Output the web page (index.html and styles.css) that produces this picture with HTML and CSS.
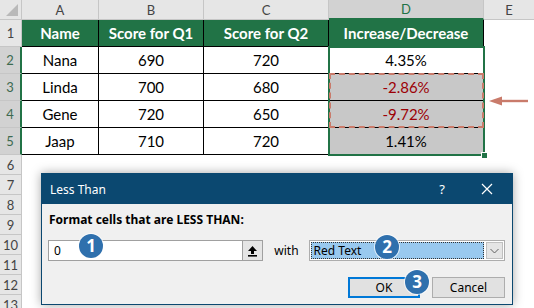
FILE: index.html
```html
<!DOCTYPE html>
<html lang="en">
  <head>
    <title>Less Than</title>
    <link rel="stylesheet" href="styles.css">
  </head>
  <body>
    <div class="sheet">
      <div class="grid">
        <div class="corner"><span class="tri"></span></div>
        <div class="colhead">A</div>
        <div class="colhead">B</div>
        <div class="colhead">C</div>
        <div class="colhead selected">D</div>
        <div class="colhead last">E</div>

        <div class="rowhead">1</div>
        <div class="cell title">Name</div>
        <div class="cell title">Score for Q1</div>
        <div class="cell title">Score for Q2</div>
        <div class="cell title">Increase/Decrease</div>
        <div class="blank"></div>

        <div class="rowhead selected">2</div>
        <div class="cell">Nana</div>
        <div class="cell">690</div>
        <div class="cell">720</div>
        <div class="cell">4.35%</div>
        <div class="blank"></div>

        <div class="rowhead selected">3</div>
        <div class="cell">Linda</div>
        <div class="cell">700</div>
        <div class="cell">680</div>
        <div class="cell shade red">-2.86%</div>
        <div class="blank"></div>

        <div class="rowhead selected">4</div>
        <div class="cell">Gene</div>
        <div class="cell">720</div>
        <div class="cell">650</div>
        <div class="cell shade red">-9.72%</div>
        <div class="blank"></div>

        <div class="rowhead selected">5</div>
        <div class="cell">Jaap</div>
        <div class="cell">710</div>
        <div class="cell">720</div>
        <div class="cell shade">1.41%</div>
        <div class="blank"></div>

        <div class="rowhead small">6</div><div class="empty"></div>
        <div class="rowhead small">7</div><div class="empty"></div>
        <div class="rowhead small">8</div><div class="empty"></div>
        <div class="rowhead small">9</div><div class="empty"></div>
        <div class="rowhead small">10</div><div class="empty"></div>
        <div class="rowhead small">11</div><div class="empty"></div>
        <div class="rowhead small">12</div><div class="empty"></div>
        <div class="rowhead small">13</div><div class="empty"></div>
      </div>

      <div class="selection"><span class="handle"></span></div>
      <div class="ants"></div>
      <svg class="pointer" width="44" height="12" viewBox="0 0 44 12">
        <path d="M12 6 H40" stroke="#c97b6b" stroke-width="2.4" />
        <path d="M1 6 L14 1.5 L14 10.5 Z" fill="#c97b6b" />
      </svg>
    </div>

    <div class="dialog">
      <div class="titlebar">
        <span class="caption">Less Than</span>
        <span class="help">?</span>
        <svg class="close" width="12" height="12" viewBox="0 0 12 12">
          <path d="M1 1 L11 11 M11 1 L1 11" stroke="#fff" stroke-width="1.2" />
        </svg>
      </div>
      <div class="dialog-body">
        <div class="prompt">Format cells that are LESS THAN:</div>
        <div class="inputs">
          <div class="field">
            <span class="value">0</span>
            <span class="collapse">
              <svg width="11" height="12" viewBox="0 0 11 12">
                <path d="M5.5 1 L10 6 H7 V9 H4 V6 H1 Z" fill="#000" />
                <rect x="1" y="10" width="9" height="1.6" fill="#000" />
              </svg>
            </span>
          </div>
          <span class="with">with</span>
          <div class="combo">
            <span class="choice">Red Text</span>
            <span class="drop">
              <svg width="9" height="6" viewBox="0 0 9 6">
                <path d="M0.5 1 L4.5 5 L8.5 1" stroke="#606060" stroke-width="1" fill="none" />
              </svg>
            </span>
          </div>
        </div>
        <div class="buttons">
          <button class="btn ok">OK</button>
          <button class="btn">Cancel</button>
        </div>
      </div>
    </div>

    <span class="badge one">1</span>
    <span class="badge two">2</span>
    <span class="badge three">3</span>
  </body>
</html>
```

FILE: styles.css
```css
html, body {
  margin: 0;
  padding: 0;
  width: 534px;
  height: 308px;
  overflow: hidden;
  background: #fff;
}

body {
  position: relative;
  font-family: Lato, "Liberation Sans", sans-serif;
}

.sheet {
  position: relative;
}

.grid {
  display: grid;
  grid-template-columns: 22px 77px 105px 125px 155px 50px;
  grid-template-rows: 20px repeat(5, 27px) repeat(8, 20px);
}

.corner {
  background: #e6e6e6;
  border-right: 1px solid #c6c6c6;
  border-bottom: 1px solid #c6c6c6;
  position: relative;
}

.tri {
  position: absolute;
  right: 3px;
  bottom: 3px;
  width: 0;
  height: 0;
  border-left: 12px solid transparent;
  border-bottom: 12px solid #b9b9b9;
}

.colhead {
  background: #e6e6e6;
  border-right: 1px solid #c6c6c6;
  border-bottom: 1px solid #c6c6c6;
  color: #444;
  font-size: 13px;
  display: flex;
  align-items: center;
  justify-content: center;
}

.colhead.selected {
  background: #d2d2d2;
  color: #217346;
  border-bottom: 2px solid #217346;
}

.colhead.last {
  border-right: none;
}

.rowhead {
  background: #e6e6e6;
  border-right: 1px solid #c6c6c6;
  border-bottom: 1px solid #c6c6c6;
  color: #444;
  font-size: 13px;
  display: flex;
  align-items: center;
  justify-content: center;
}

.rowhead.selected {
  background: #d2d2d2;
  color: #3d6a50;
  border-right: 2px solid #217346;
}

.cell {
  border-right: 1px solid #000;
  border-bottom: 1px solid #000;
  font-size: 15px;
  color: #000;
  display: flex;
  align-items: center;
  justify-content: center;
}

.cell.title {
  background: #217346;
  color: #fff;
  font-weight: bold;
}

.cell.shade {
  background: #c8c8c8;
}

.cell.red {
  color: #9c0006;
}

.empty {
  grid-column: 2 / 7;
}

/* selection overlays on column D */
.selection {
  position: absolute;
  left: 328px;
  top: 46px;
  width: 153px;
  height: 106px;
  border: 2px solid #217346;
}

.handle {
  position: absolute;
  right: -5px;
  bottom: -5px;
  width: 5px;
  height: 5px;
  background: #217346;
  border: 1px solid #fff;
}

.ants {
  position: absolute;
  left: 329px;
  top: 73px;
  width: 151px;
  height: 51px;
  border: 2px dashed #c97b6b;
}

.pointer {
  position: absolute;
  left: 488px;
  top: 95px;
}

/* dialog */
.dialog {
  position: absolute;
  left: 41px;
  top: 173px;
  width: 470px;
  height: 130px;
  border: 1px solid #0b4870;
  background: #f0f0f0;
  box-shadow: 0 0 10px rgba(0, 0, 0, 0.35);
  font-family: "Noto Sans", "Open Sans", sans-serif;
  font-size: 12px;
  color: #000;
}

.titlebar {
  height: 30px;
  background: #0b4870;
  color: #fff;
  display: flex;
  align-items: center;
  padding-left: 8px;
}

.caption {
  flex: 1;
}

.help {
  margin-right: 36px;
  font-size: 13px;
}

.close {
  margin-right: 19px;
}

.dialog-body {
  padding: 8px 7px 0 6px;
}

.prompt {
  font-weight: bold;
  line-height: 16px;
  margin-left: 1px;
}

.inputs {
  display: flex;
  align-items: center;
  margin-top: 12px;
  height: 21px;
}

.field {
  display: flex;
  width: 216px;
  height: 21px;
  box-sizing: border-box;
  border: 1px solid #a0a0a0;
  background: #fff;
}

.value {
  flex: 1;
  padding-left: 5px;
  line-height: 19px;
}

.collapse {
  width: 19px;
  background: #e5e5e5;
  border-left: 1px solid #a0a0a0;
  display: flex;
  align-items: center;
  justify-content: center;
}

.with {
  margin-left: 11px;
  margin-right: 10px;
}

.combo {
  display: flex;
  width: 197px;
  height: 21px;
  box-sizing: border-box;
  border: 1px solid #adadad;
  background: #fff;
  padding: 1px;
}

.choice {
  flex: 1;
  background: #99c9ef;
  outline: 1px dotted #333;
  outline-offset: -1px;
  padding-left: 3px;
  line-height: 17px;
  margin-right: 2px;
}

.drop {
  width: 17px;
  background: #e5e5e5;
  border: 1px solid #c0c0c0;
  box-sizing: border-box;
  display: flex;
  align-items: center;
  justify-content: center;
}

.buttons {
  display: flex;
  justify-content: flex-end;
  gap: 12px;
  margin-top: 16px;
}

.btn {
  width: 73px;
  height: 21px;
  background: #e1e1e1;
  border: 1px solid #adadad;
  font-family: "Noto Sans", "Open Sans", sans-serif;
  font-size: 12px;
  color: #000;
  padding: 0;
}

.btn.ok {
  width: 72px;
  border: 2px solid #0078d7;
}

/* step markers */
.badge {
  position: absolute;
  width: 24px;
  height: 24px;
  border-radius: 50%;
  background: #2f70ad;
  box-shadow: 0 0 0 1px rgba(255, 255, 255, 0.7);
  color: #fff;
  font-family: "Open Sans", sans-serif;
  font-weight: bold;
  font-size: 17px;
  line-height: 24px;
  text-align: center;
}

.badge.one {
  left: 79px;
  top: 234px;
}

.badge.two {
  left: 375px;
  top: 235px;
}

.badge.three {
  left: 405px;
  top: 270px;
}
```
